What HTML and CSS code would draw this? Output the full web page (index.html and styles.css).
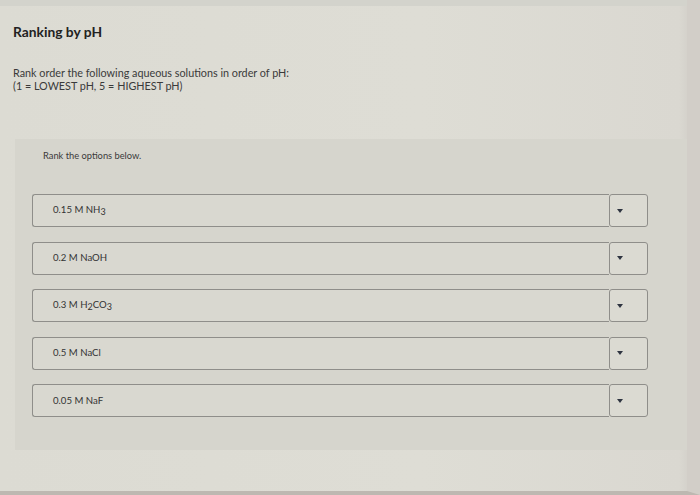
FILE: index.html
```html
<!DOCTYPE html>
<html>
<head>
<meta charset="utf-8">
<link rel="stylesheet" href="styles.css">
</head>
<body>
<div class="page">
  <div class="topstrip"></div>
  <header class="head">
    <h1 class="title">Ranking by pH</h1>
    <p class="prompt">Rank order the following aqueous solutions in order of pH:<br>(1 = LOWEST pH, 5 = HIGHEST pH)</p>
  </header>
  <section class="panel">
    <div class="label">Rank the options below.</div>
    <div class="rows">
      <div class="row"><div class="opt"><span class="txt">0.15 M NH<span class="sb">3</span></span></div><div class="sel"><span class="caret"></span></div></div>
      <div class="row"><div class="opt"><span class="txt">0.2 M NaOH</span></div><div class="sel"><span class="caret"></span></div></div>
      <div class="row"><div class="opt"><span class="txt">0.3 M H<span class="sb">2</span>CO<span class="sb">3</span></span></div><div class="sel"><span class="caret"></span></div></div>
      <div class="row"><div class="opt"><span class="txt">0.5 M NaCl</span></div><div class="sel"><span class="caret"></span></div></div>
      <div class="row"><div class="opt"><span class="txt">0.05 M NaF</span></div><div class="sel"><span class="caret"></span></div></div>
    </div>
  </section>
</div>
</body>
</html>
```

FILE: styles.css
```css
html, body {
  margin: 0;
  padding: 0;
}
body {
  width: 700px;
  height: 495px;
  overflow: hidden;
  background: linear-gradient(90deg, #dcdbd3 0%, #deddd5 60%, #dad8d1 97%, #ccc8c2 100%);
  font-family: Lato, "Open Sans", sans-serif;
  color: #2f2f2f;
}
.page {
  height: 495px;
  border-right: 13px solid #d2cec8;
  box-sizing: border-box;
  border-bottom: 4px solid #bdb8b1;
}
.topstrip {
  height: 6px;
  background: #d3d3cc;
}
.head {
  padding: 0 0 0 13px;
}
.title {
  margin: 18px 0 0 0;
  font-size: 13.8px;
  font-weight: 700;
  line-height: 16px;
  color: #222;
}
.prompt {
  margin: 26px 0 0 0;
  font-size: 10.8px;
  line-height: 13px;
  color: #3a3a3a;
}
.panel {
  margin: 47px 0 0 15px;
  width: 672px;
  height: 311px;
  background: #d6d5cd;
  box-sizing: border-box;
  padding: 11px 39px 0 17px;
}
.label {
  padding-left: 11px;
  font-size: 9.3px;
  line-height: 12px;
  color: #3a3a3a;
}
.rows {
  margin-top: 32px;
  display: flex;
  flex-direction: column;
  gap: 14.5px;
}
.row {
  display: flex;
  height: 33px;
}
.opt {
  flex: 1;
  border: 1px solid #8f8e8a;
  border-right: none;
  border-radius: 3px 0 0 3px;
  background: #d9d8d0;
  display: flex;
  align-items: center;
  padding-left: 20px;
}
.txt {
  font-size: 9.6px;
  line-height: 12px;
  color: #333;
}
.sb {
  font-size: 9px;
  vertical-align: -2px;
}
.sel {
  width: 39px;
  border: 1px solid #8f8e8a;
  border-radius: 3px;
  background: #dbdad2;
  display: flex;
  align-items: center;
  padding-left: 7px;
  box-sizing: border-box;
}
.caret {
  width: 0;
  height: 0;
  border-left: 3px solid transparent;
  border-right: 3px solid transparent;
  border-top: 4px solid #2e3440;
}
```
